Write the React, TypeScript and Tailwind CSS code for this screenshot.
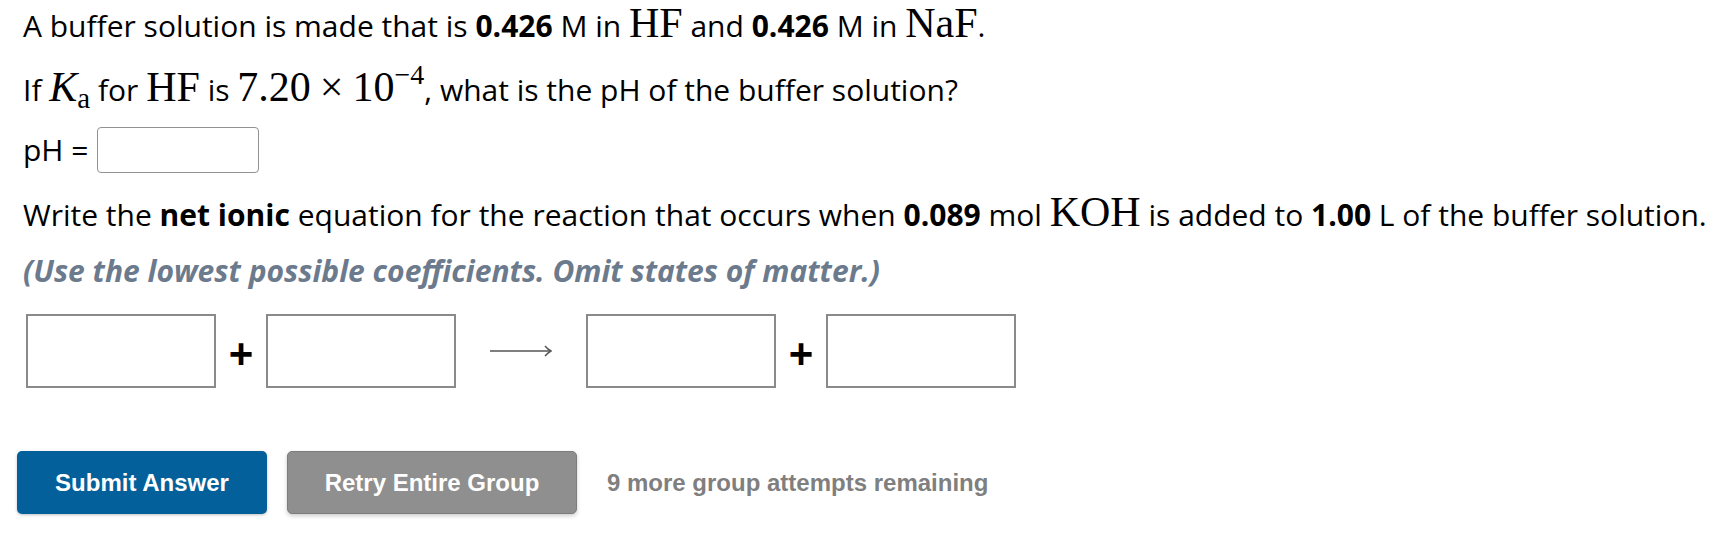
import React from 'react';

const M = "font-['Liberation_Serif',serif] text-[42px]";

const EqBox: React.FC = () => (
  <div className="w-[190px] h-[74px] border-2 border-[#8a8a8a] bg-white" />
);

const Plus: React.FC = () => (
  <span className="w-[50px] text-center font-['Liberation_Sans',sans-serif] font-bold text-[42px] leading-none text-black pt-[6px]">+</span>
);

const App: React.FC = () => {
  return (
    <div className="w-[1734px] h-[541px] bg-white text-black font-['Open_Sans',sans-serif] text-[30px] overflow-hidden">
      <div className="pl-[23px] pt-[3px]">
        <div className="h-[40px] leading-[40px] whitespace-nowrap">
          A buffer solution is made that is <b>0.426</b> M in <span className={M}>HF</span> and <b>0.426</b> M in <span className={M}>NaF</span>.
        </div>

        <div className="mt-[24px] h-[40px] leading-[40px] whitespace-nowrap">
          If{' '}
          <span className={M}>
            <i>K</i>
            <span className="font-['Liberation_Serif',serif] text-[29px] leading-[0] align-[-7px]">a</span>
          </span>{' '}
          for <span className={M}>HF</span> is{' '}
          <span className={M}>
            7.20<span className="mx-[9px]">×</span>10<span className="text-[28px] leading-[0] align-[17px]">−4</span>
          </span>
          , what is the pH of the buffer solution?
        </div>

        <div className="mt-[20px] flex items-center h-[46px] gap-[9px]">
          <span className="leading-[46px]">pH =</span>
          <div className="w-[162px] h-[46px] border-[1.5px] border-[#929292] rounded-[4px] bg-white" />
        </div>

        <div className="mt-[19px] h-[40px] leading-[40px] whitespace-nowrap">
          Write the <b>net ionic</b> equation for the reaction that occurs when <b>0.089</b> mol <span className={M}>KOH</span> is added to <b>1.00</b> L of the buffer solution.
        </div>

        <div className="mt-[19px] h-[40px] leading-[40px] whitespace-nowrap italic font-bold text-[#6b7a8c]">
          (Use the lowest possible coefficients. Omit states of matter.)
        </div>
      </div>

      <div className="pl-[26px] mt-[23px] flex items-center">
        <EqBox />
        <Plus />
        <EqBox />
        <div className="w-[130px] flex justify-center">
          <svg width="62" height="16" viewBox="0 0 62 16">
            <line x1="0" y1="8" x2="60" y2="8" stroke="#555" strokeWidth="1.6" />
            <path d="M55 3 Q58 6.5 61 8 Q58 9.5 55 13" fill="none" stroke="#555" strokeWidth="1.4" />
          </svg>
        </div>
        <EqBox />
        <Plus />
        <EqBox />
      </div>

      <div className="pl-[17px] mt-[63px] flex items-center font-['Liberation_Sans',Arial,sans-serif] font-bold text-[24px]">
        <button className="w-[250px] h-[63px] rounded-[5px] bg-[#03609a] text-white shadow-[0_1px_3px_rgba(0,0,0,0.25)]">
          Submit Answer
        </button>
        <button className="ml-[20px] w-[290px] h-[63px] rounded-[5px] bg-[#8f8f8f] border border-[#7c7c7c] text-white shadow-[0_2px_4px_rgba(0,0,0,0.2)]">
          Retry Entire Group
        </button>
        <span className="ml-[30px] text-[#7f7f7f]">9 more group attempts remaining</span>
      </div>
    </div>
  );
};

export default App;
